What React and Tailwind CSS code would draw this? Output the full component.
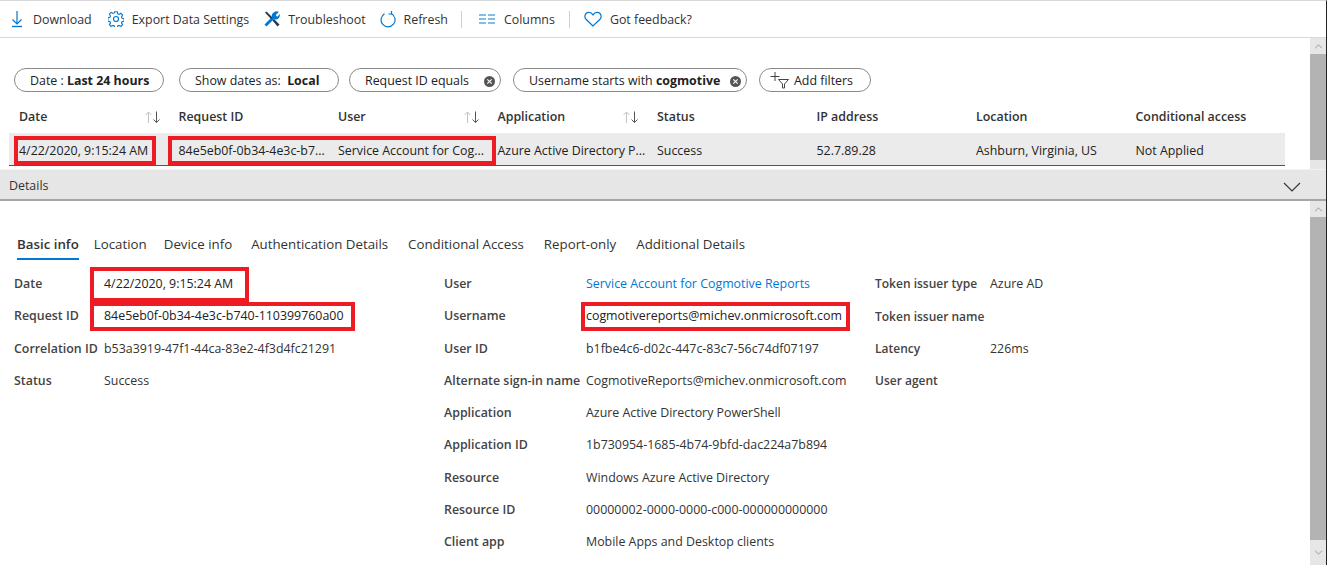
const font = "font-['Open_Sans','Liberation_Sans',sans-serif]"

const columns = [
  { label: 'Date', value: '4/22/2020, 9:15:24 AM', sort: true },
  { label: 'Request ID', value: '84e5eb0f-0b34-4e3c-b7...' },
  { label: 'User', value: 'Service Account for Cog...', sort: true },
  { label: 'Application', value: 'Azure Active Directory P...', sort: true },
  { label: 'Status', value: 'Success' },
  { label: 'IP address', value: '52.7.89.28' },
  { label: 'Location', value: 'Ashburn, Virginia, US' },
  { label: 'Conditional access', value: 'Not Applied' },
]

const tabs = [
  { label: 'Location', className: '-mr-px' },
  { label: 'Device info', className: 'mr-px' },
  { label: 'Authentication Details', className: 'mr-[2px]' },
  { label: 'Conditional Access', className: 'mr-[2px]' },
  { label: 'Report-only', className: 'mr-[2px]' },
  { label: 'Additional Details', className: '' },
]

const col1 = [
  ['Date', '4/22/2020, 9:15:24 AM', '-left-[14px] -right-[16px] -top-[8px] -bottom-[8px]'],
  ['Request ID', '84e5eb0f-0b34-4e3c-b740-110399760a00', '-left-[14px] -right-[11px] -top-[5px] -bottom-[5px]'],
  ['Correlation ID', 'b53a3919-47f1-44ca-83e2-4f3d4fc21291'],
  ['Status', 'Success'],
]

const col2 = [
  ['User', 'Service Account for Cogmotive Reports', null, true],
  ['Username', 'cogmotivereports@michev.onmicrosoft.com', '-left-[5px] -right-[8px] -top-[5px] -bottom-[5px]'],
  ['User ID', 'b1fbe4c6-d02c-447c-83c7-56c74df07197'],
  ['Alternate sign-in name', 'CogmotiveReports@michev.onmicrosoft.com'],
  ['Application', 'Azure Active Directory PowerShell'],
  ['Application ID', '1b730954-1685-4b74-9bfd-dac224a7b894'],
  ['Resource', 'Windows Azure Active Directory'],
  ['Resource ID', '00000002-0000-0000-c000-000000000000'],
  ['Client app', 'Mobile Apps and Desktop clients'],
]

const col3 = [
  ['Token issuer type', 'Azure AD'],
  ['Token issuer name', ''],
  ['Latency', '226ms'],
  ['User agent', ''],
]

function ToolButton({ icon, label, className = '' }) {
  return (
    <button className={`flex items-center gap-2 text-[12.4px] text-[#333] ${className}`}>
      {icon}
      <span className="pt-[2px]">{label}</span>
    </button>
  )
}

function Pill({ children, close, className = '' }) {
  return (
    <div className={`h-6 border border-[#8a8a8a] rounded-full flex items-center text-[12.4px] text-[#222] whitespace-nowrap ${className}`}>
      {children}
      {close && (
        <span className="ml-auto w-[11px] h-[11px] rounded-full bg-[#555] text-white flex items-center justify-center">
          <svg viewBox="0 0 8 8" className="w-[7px] h-[7px]">
            <path d="M1.5 1.5l5 5M6.5 1.5l-5 5" stroke="currentColor" strokeWidth="1.2" />
          </svg>
        </span>
      )}
    </div>
  )
}

function Chevron({ up }) {
  return (
    <svg viewBox="0 0 10 6" className="w-[9px] h-[5px]">
      <path d={up ? 'M1 5l4-4 4 4' : 'M1 1l4 4 4-4'} fill="none" stroke="#8a8a8a" strokeWidth="1" />
    </svg>
  )
}

function Scrollbar({ top, thumb, track }) {
  return (
    <div className="w-4 shrink-0 flex flex-col bg-[#e6e6e6]">
      <div className="h-4 flex items-center justify-center"><Chevron up /></div>
      <div className="bg-[#b3b3b3]" style={{ height: thumb }} />
      <div style={{ height: track }} />
      {top ? null : <div className="flex-1 flex items-center justify-center"><Chevron /></div>}
    </div>
  )
}

function SortArrows() {
  return (
    <svg viewBox="0 0 18 14" className="w-[18px] h-[14px]">
      <path d="M4.500 13V2M1.500 5l3-3 3 3" fill="none" stroke="#c4c4c4" strokeWidth="1" />
      <path d="M12.500 1.500v11M9.500 9.500l3 3 3-3" fill="none" stroke="#555" strokeWidth="1" />
    </svg>
  )
}

function DetailColumn({ rows, labelWidth, labelClass = 'text-[12.4px]', className = '' }) {
  return (
    <div className={`flex flex-col ${className}`}>
      {rows.map(([label, value, box, link]) => (
        <div key={label} className="h-[32.3px] flex items-center text-[12.4px] whitespace-nowrap">
          <div className={`font-semibold text-[#444] shrink-0 ${labelClass}`} style={{ width: labelWidth }}>{label}</div>
          {box ? (
            <div className="relative text-[#222]">
              {value}
              <div className={`absolute border-4 border-[#ed1c24] ${box}`} />
            </div>
          ) : (
            <div className={link ? 'text-[#0078d4]' : 'text-[#333]'}>{value}</div>
          )}
        </div>
      ))}
    </div>
  )
}

export default function App() {
  return (
    <div className={`${font} w-[1327px] h-[565px] overflow-hidden bg-white flex flex-col border-r border-[#222] border-t border-t-[#d8d8d8]`}>
      {/* Toolbar */}
      <div className="h-[37px] shrink-0 border-b border-[#d9d9d9] flex items-center pl-[9px]">
        <ToolButton
          label="Download"
          icon={
            <svg viewBox="0 0 16 18" fill="none" className="w-4 h-[18px]">
              <path d="M8 1v13M3.500 9.500L8 14l4.500-4.500" stroke="#0078d4" strokeWidth="1.200" />
              <path d="M3 16.500h10" stroke="#0078d4" strokeWidth="1.400" />
            </svg>
          }
        />
        <ToolButton
          className="ml-[16px]"
          label="Export Data Settings"
          icon={
            <svg viewBox="0 0 16 16" fill="none" className="w-4 h-4">
              <circle cx="8" cy="8" r="2.500" stroke="#0078d4" strokeWidth="1.200" />
              <path d="M6.700.8h2.600l.4 2 1.300.6 1.800-1.100 1.800 1.800-1.100 1.800.6 1.300 2 .4v2.600l-2 .4-.6 1.300 1.100 1.800-1.800 1.800-1.800-1.100-1.300.6-.4 2H6.700l-.4-2-1.300-.6-1.800 1.100-1.800-1.800 1.100-1.800-.6-1.300-2-.4V6.700l2-.4.6-1.300-1.100-1.800 1.800-1.800 1.800 1.100 1.300-.6z" stroke="#0078d4" strokeWidth="1.100" />
            </svg>
          }
        />
        <ToolButton
          className="ml-[15px]"
          label="Troubleshoot"
          icon={
            <svg viewBox="0 0 16 16" className="w-4 h-4">
              <path d="M.5 13.500L9 5l2 2-8.500 8.500z" fill="#0078d4" />
              <path d="M10 1.200a4 4 0 014.800-.2L12 3.700l.3 1.600 1.500.3L15.500 3a4 4 0 01-5.200 5.200L8 6a4 4 0 012-4.800z" fill="#0078d4" />
              <path d="M1 1.500L2.500.500 8.500 6.500l-1.500 1.500z" fill="#1f3b57" />
              <path d="M8.500 9.500l1.500-1.500 5.500 5.500-2 2z" fill="#1f3b57" />
            </svg>
          }
        />
        <ToolButton
          className="ml-[14px]"
          label="Refresh"
          icon={
            <svg viewBox="0 0 16 18" fill="none" className="w-4 h-[18px]">
              <path d="M4.500 3.800a7 7 0 107-.1" stroke="#0078d4" strokeWidth="1.200" />
              <path d="M11.500 1v3h-3" stroke="#0078d4" strokeWidth="1.200" />
            </svg>
          }
        />
        <div className="w-px h-[17px] bg-[#d0d0d0] ml-[13px]" />
        <ToolButton
          className="ml-[16px]"
          label="Columns"
          icon={
            <svg viewBox="0 0 18 16" fill="none" className="w-[18px] h-4">
              <path d="M1 4h7M1 8h7M1 12h7M10 4h7M10 8h7M10 12h7" stroke="#5ca8e0" strokeWidth="1.500" />
            </svg>
          }
        />
        <div className="w-px h-[17px] bg-[#d0d0d0] ml-[14px]" />
        <ToolButton
          className="ml-[14px]"
          label="Got feedback?"
          icon={
            <svg viewBox="0 0 18 16" fill="none" className="w-[18px] h-4">
              <path d="M9 15L2 8.300C-.2 5.800 1 1.500 4.800 1.300 6.700 1.200 8 2.300 9 3.800c1-1.500 2.300-2.600 4.200-2.500C17 1.500 18.200 5.800 16 8.300z" stroke="#0078d4" strokeWidth="1.200" />
            </svg>
          }
        />
      </div>

      {/* Upper pane */}
      <div className="h-[131px] shrink-0 flex">
        <div className="flex-1 min-w-0">
          <div className="flex items-center h-6 mt-[30px] pl-[14px]">
            <Pill className="w-[150px] pl-[15px] pt-[2px]">
              Date :&nbsp;<b className="font-bold">Last 24 hours</b>
            </Pill>
            <Pill className="w-[160px] ml-[15px] pl-[15px] pt-[2px]">
              Show dates as:&nbsp;&nbsp;<b className="font-bold">Local</b>
            </Pill>
            <Pill close className="w-[152px] ml-[10px] pl-[15px] pr-[5px] pt-[2px]">Request ID equals</Pill>
            <Pill close className="w-[234px] ml-[12px] pl-[15px] pr-[5px] pt-[2px]">
              Username starts with&nbsp;<b className="font-bold">cogmotive</b>
            </Pill>
            <Pill className="w-[112px] ml-[12px] pl-[9px] gap-[3px] pt-[2px]">
              <svg viewBox="0 0 22 18" className="w-[22px] h-[18px] -mt-[2px]">
                <path d="M6 1v9M1.500 5.500h9" stroke="#444" strokeWidth="1" />
                <path d="M9.500 8.500h10l-4 4.500v4h-2v-4z" fill="none" stroke="#444" strokeWidth="1" />
              </svg>
              Add filters
            </Pill>
          </div>

          <div className="ml-[9px] w-[1276px] mt-[11px]">
            <div className="grid grid-cols-8 h-[30px] items-center">
              {columns.map((c) => (
                <div key={c.label} className="pl-[10px] pr-[7px] pb-[2px] flex items-center justify-between text-[12.4px] font-semibold text-[#333] whitespace-nowrap">
                  {c.label}
                  {c.sort && <SortArrows />}
                </div>
              ))}
            </div>
            <div className="relative grid grid-cols-8 h-[33px] items-center bg-[#ebebeb] border-b border-[#555]">
              {columns.map((c) => (
                <div key={c.label} className="pl-[10px] pt-[4px] text-[12.4px] text-[#222] whitespace-nowrap overflow-hidden">{c.value}</div>
              ))}
              <div className="absolute left-[5px] top-[3px] w-[142px] h-[29px] border-4 border-[#ed1c24]" />
              <div className="absolute left-[159px] top-[3px] w-[328px] h-[29px] border-4 border-[#ed1c24]" />
            </div>
          </div>
        </div>
        <Scrollbar top thumb={106} track={9} />
      </div>

      {/* Details bar */}
      <div className="h-[32px] shrink-0 bg-[#e6e6e6] border-t border-[#f2f2f2] border-b-2 border-b-[#a6a6a6] flex items-center justify-between pl-[9px] pr-[25px] pt-[4px] text-[12.4px] text-[#333]">
        Details
        <svg viewBox="0 0 18 10" className="w-[18px] h-[10px]">
          <path d="M1 1l8 8 8-8" fill="none" stroke="#333" strokeWidth="1.100" />
        </svg>
      </div>

      {/* Lower pane */}
      <div className="flex-1 flex min-h-0">
        <div className="flex-1 min-w-0">
          <div className="flex mt-[34px] pl-[17px] h-[25px] gap-[18px] text-[13.300px] text-[#333] whitespace-nowrap">
            <div className="font-semibold text-[#333] border-b-2 border-[#0078d4] -mr-[3px]">Basic info</div>
            {tabs.map((t) => (
              <div key={t.label} className={t.className}>{t.label}</div>
            ))}
          </div>
          <div className="flex mt-[8.1px] pl-[14px]">
            <DetailColumn rows={col1} labelWidth={90} className="w-[430px]" />
            <DetailColumn rows={col2} labelWidth={142} className="w-[431px]" />
            <DetailColumn rows={col3} labelWidth={115} labelClass="text-[12px]" />
          </div>
        </div>
        <Scrollbar thumb={323} track={0} />
      </div>
    </div>
  )
}
